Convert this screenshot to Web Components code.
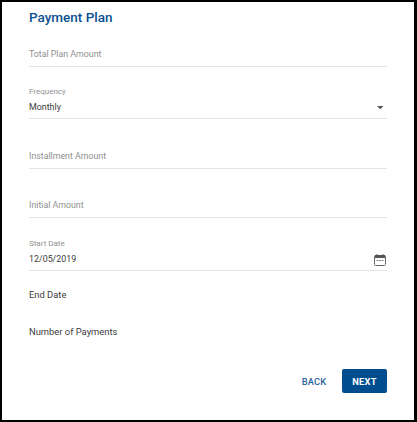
<!DOCTYPE html>
<html>
<head>
<meta charset="utf-8">
<title>Payment Plan</title>
<style>
  html, body { margin: 0; padding: 0; background: #fff; }
  body { font-family: Roboto, "Liberation Sans", sans-serif; }
</style>
</head>
<body>
<payment-plan></payment-plan>
<script>
class TextField extends HTMLElement {
  connectedCallback() {
    const label = this.getAttribute('label') || '';
    const value = this.getAttribute('value');
    this.attachShadow({ mode: 'open' });
    this.shadowRoot.innerHTML = `
      <style>
        :host { display: flex; flex-direction: column; justify-content: flex-end; box-sizing: border-box; border-bottom: 1px solid #e4e4e4; }
        .label { font-size: 8px; line-height: 11px; color: #909090; margin-bottom: 4px; }
        .row { display: flex; align-items: center; justify-content: space-between; height: 13px; margin-bottom: 4px; }
        .row.bare { margin-bottom: 5px; }
        .value { font-size: 8.9px; line-height: 13px; color: #3c3c3c; }
        .empty { font-size: 8.8px; line-height: 13px; color: #909090; }
        ::slotted(svg) { display: block; }
      </style>
      ${value ? `<div class="label">${label}</div>
      <div class="row"><span class="value">${value}</span><slot></slot></div>`
      : `<div class="row bare"><span class="empty">${label}</span><slot></slot></div>`}
    `;
  }
}
customElements.define('text-field', TextField);

class PlainField extends HTMLElement {
  connectedCallback() {
    this.attachShadow({ mode: 'open' });
    this.shadowRoot.innerHTML = `
      <style>
        :host { display: block; font-size: 9.4px; line-height: 13px; color: #3c3c3c; }
      </style>
      <slot></slot>
    `;
  }
}
customElements.define('plain-field', PlainField);

class FlatButton extends HTMLElement {
  connectedCallback() {
    this.attachShadow({ mode: 'open' });
    this.shadowRoot.innerHTML = `
      <style>
        :host { display: flex; align-items: center; justify-content: center; height: 24px; box-sizing: border-box; border-radius: 2px; font-size: 9.3px; font-weight: 500; letter-spacing: 0.2px; color: #2a659d; }
        :host([primary]) { background: #004e8f; color: #fff; font-weight: 700; }
      </style>
      <slot></slot>
    `;
  }
}
customElements.define('flat-button', FlatButton);

class PaymentPlan extends HTMLElement {
  connectedCallback() {
    this.attachShadow({ mode: 'open' });
    this.shadowRoot.innerHTML = `
      <style>
        :host { display: block; box-sizing: border-box; width: 417px; height: 422px; border-style: solid; border-color: #000; border-width: 2px 3px 2px 2px; background: #fff; font-family: Roboto, "Liberation Sans", sans-serif; }
        .form { display: flex; flex-direction: column; padding: 0 27px 0 27px; }
        h1 { margin: 7px 0 0; font-size: 13.5px; line-height: 16px; font-weight: 500; color: #0b4f8f; }
        .f1 { height: 24px; margin-top: 18px; }
        .f2 { height: 38px; margin-top: 14px; }
        .f3 { height: 24px; margin-top: 26px; }
        .f4 { height: 24px; margin-top: 25px; }
        .f5 { height: 38px; margin-top: 15px; }
        .p1 { margin-top: 17px; }
        .p2 { margin-top: 24px; }
        .actions { display: flex; justify-content: flex-end; gap: 5px; margin-top: 31px; }
        .back { width: 46px; }
        .next { width: 45px; }
      </style>
      <div class="form">
        <h1>Payment Plan</h1>
        <text-field class="f1" label="Total Plan Amount"></text-field>
        <text-field class="f2" label="Frequency" value="Monthly">
          <svg width="6.5" height="3.25" viewBox="0 0 8 4" style="margin-right:4px"><path d="M0 0h8L4 4z" fill="#555"/></svg>
        </text-field>
        <text-field class="f3" label="Installment Amount"></text-field>
        <text-field class="f4" label="Initial Amount"></text-field>
        <text-field class="f5" label="Start Date" value="12/05/2019">
          <svg width="12" height="12" viewBox="0 0 12 12" fill="none" style="margin-right:1px"><rect x="0.5" y="1.5" width="11" height="10" rx="1" stroke="#666"/><rect x="1" y="1" width="10" height="3" fill="#555"/><path d="M3 0v2M9 0v2" stroke="#555"/><path d="M2.5 6.5h2M5 6.5h2M7.5 6.5h2" stroke="#888"/></svg>
        </text-field>
        <plain-field class="p1">End Date</plain-field>
        <plain-field class="p2">Number of Payments</plain-field>
        <div class="actions">
          <flat-button class="back">BACK</flat-button>
          <flat-button class="next" primary>NEXT</flat-button>
        </div>
      </div>
    `;
  }
}
customElements.define('payment-plan', PaymentPlan);
</script>
</body>
</html>
